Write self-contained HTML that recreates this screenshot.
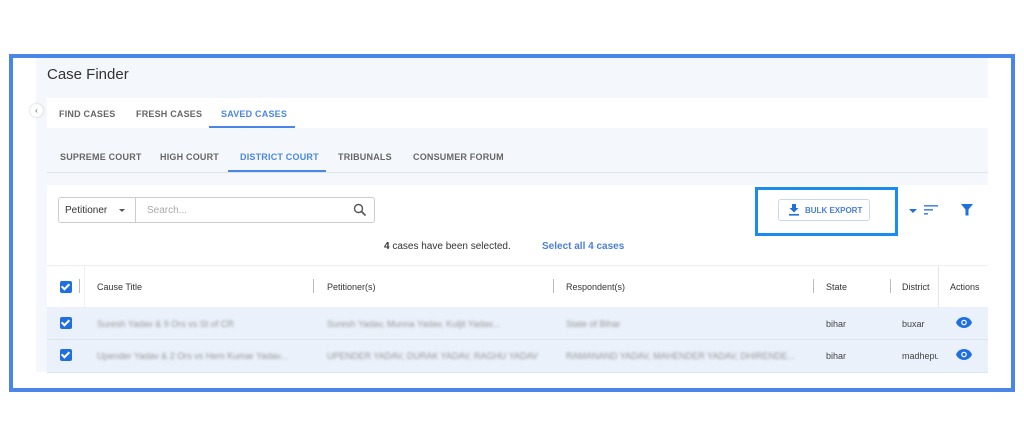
<!DOCTYPE html>
<html><head><meta charset="utf-8"><style>
*{box-sizing:border-box;margin:0;padding:0}
body{width:1024px;height:446px;background:#fff;font-family:"Liberation Sans",sans-serif;position:relative;overflow:hidden}
.frame{position:absolute;left:9px;top:54px;width:1006px;height:338px;border:4px solid #4a86e8}
.panel{position:absolute;left:36px;top:58px;width:952px;height:314px;background:#f4f7fb}
.abs{position:absolute}
.title{left:47px;top:66px;font-size:15px;color:#333}
.tabs{left:47px;top:98px;width:941px;height:30px;background:#fff}
.tab{position:absolute;top:11px;font-size:9px;font-weight:bold;color:#666;letter-spacing:.2px}
.blue{color:#4a86e8}
.ul{position:absolute;height:2px;background:#4a86e8}
.sub{left:47px;top:128px;width:941px;height:45px;border-bottom:1px solid #dfe3ea}
.card{left:47px;top:185px;width:941px;height:187px;background:#fff}
.circ{left:30px;top:104px;width:13px;height:13px;border-radius:50%;background:#fff;box-shadow:0 0 2px #bbb;font-size:8px;color:#555;text-align:center;line-height:13px}
.cb{position:absolute;width:12px;height:12px;background:#1f6fe0;border-radius:2px}
.cb:after{content:"";position:absolute;left:3px;top:1px;width:3px;height:6px;border:solid #fff;border-width:0 2px 2px 0;transform:rotate(45deg)}
.th{position:absolute;top:282px;font-size:9px;color:#333}
.sep{position:absolute;top:279px;width:1px;height:14px;background:#bbb}
.row{position:absolute;left:47px;width:941px;height:33px;background:#eaf1fb;border-bottom:1px solid #dde5f0}
.bl{position:absolute;font-size:9px;color:#999;filter:blur(1.3px)}
.td{position:absolute;font-size:9px;color:#444}
</style></head><body>
<div class="frame"></div>
<div class="panel abs"></div>
<div class="abs title">Case Finder</div>
<div class="abs tabs">
 <div class="tab" style="left:12px">FIND CASES</div>
 <div class="tab" style="left:89px">FRESH CASES</div>
 <div class="tab blue" style="left:174px">SAVED CASES</div>
 <div class="ul" style="left:162px;top:28px;width:86px"></div>
</div>
<div class="abs circ">‹</div>
<div class="abs sub">
 <div class="tab" style="left:13px;top:24px">SUPREME COURT</div>
 <div class="tab" style="left:113px;top:24px">HIGH COURT</div>
 <div class="tab blue" style="left:193px;top:24px">DISTRICT COURT</div>
 <div class="tab" style="left:291px;top:24px">TRIBUNALS</div>
 <div class="tab" style="left:366px;top:24px">CONSUMER FORUM</div>
 <div class="ul" style="left:181px;top:42px;width:98px"></div>
</div>
<div class="abs card"></div>
<div class="abs" style="left:58px;top:197px;width:317px;height:26px;border:1px solid #ccc;border-radius:3px;background:#fff">
 <div class="abs" style="left:76px;top:0;width:1px;height:24px;background:#ccc"></div>
 <div class="abs" style="left:6px;top:7px;font-size:10px;color:#333">Petitioner</div>
 <div class="abs" style="left:60px;top:11px;border:3px solid transparent;border-top:3px solid #555"></div>
 <div class="abs" style="left:88px;top:7px;font-size:10px;color:#aaa">Search...</div>
 <svg class="abs" style="left:294px;top:5px" width="14" height="14" viewBox="0 0 14 14"><circle cx="5.5" cy="5.5" r="4" fill="none" stroke="#555" stroke-width="1.4"/><path d="M8.5 8.5L12.5 12.5" stroke="#555" stroke-width="1.6"/></svg>
</div>
<div class="abs" style="left:755px;top:187px;width:143px;height:49px;border:3px solid #1a8cf0"></div>
<div class="abs" style="left:778px;top:199px;width:92px;height:22px;border:1px solid #c8d8f0;border-radius:3px;background:#fff">
 <svg class="abs" style="left:9px;top:4px" width="12" height="12" viewBox="0 0 12 12"><path d="M4 0h4v4h2.5L6 8.5 1.5 4H4z" fill="#1f6fe0"/><rect x="1" y="10" width="10" height="1.6" fill="#1f6fe0"/></svg>
 <div class="abs" style="left:26px;top:6px;font-size:8px;font-weight:bold;color:#4a7fd8">BULK EXPORT</div>
</div>
<div class="abs" style="left:909px;top:209px;border:4px solid transparent;border-top:4px solid #1f6fe0"></div>
<svg class="abs" style="left:924px;top:204px" width="14" height="12" viewBox="0 0 14 12"><rect x="0" y="1" width="14" height="1.6" fill="#4a86e8"/><rect x="0" y="5" width="9" height="1.6" fill="#4a86e8"/><rect x="0" y="9" width="4" height="1.6" fill="#4a86e8"/></svg>
<svg class="abs" style="left:961px;top:204px" width="12" height="12" viewBox="0 0 12 12"><path d="M0 0h12L7.5 5.5V11.5H4.5V5.5z" fill="#1f6fe0"/></svg>
<div class="abs" style="left:384px;top:241px;font-size:10px;color:#333"><b>4</b> cases have been selected.</div>
<div class="abs" style="left:542px;top:241px;font-size:10px;font-weight:bold;color:#4a7fd8">Select all 4 cases</div>
<div class="abs" style="left:47px;top:265px;width:941px;height:1px;background:#eee"></div>
<div class="abs" style="left:938px;top:266px;width:1px;height:106px;background:#e2e6ec"></div>
<div class="abs" style="left:84px;top:266px;width:1px;height:106px;background:#eef0f3"></div>
<div class="cb" style="left:60px;top:281px"></div>
<div class="sep" style="left:79px"></div>
<div class="th" style="left:97px">Cause Title</div>
<div class="sep" style="left:313px"></div>
<div class="th" style="left:327px">Petitioner(s)</div>
<div class="sep" style="left:553px"></div>
<div class="th" style="left:566px">Respondent(s)</div>
<div class="sep" style="left:813px"></div>
<div class="th" style="left:826px">State</div>
<div class="sep" style="left:890px"></div>
<div class="th" style="left:902px">District</div>
<div class="th" style="left:950px">Actions</div>
<div class="row" style="top:307px"></div>
<div class="row" style="top:340px"></div>
<div class="cb" style="left:60px;top:317px"></div>
<div class="cb" style="left:60px;top:349px"></div>
<div class="bl" style="left:97px;top:319px">Suresh Yadav &amp; 9 Ors vs St of CR</div>
<div class="bl" style="left:327px;top:319px">Suresh Yadav, Munna Yadav, Kuljit Yadav...</div>
<div class="bl" style="left:566px;top:319px">State of Bihar</div>
<div class="bl" style="left:97px;top:351px">Upender Yadav &amp; 2 Ors vs Hem Kumar Yadav...</div>
<div class="bl" style="left:327px;top:351px">UPENDER YADAV, DURAK YADAV, RAGHU YADAV</div>
<div class="bl" style="left:566px;top:351px">RAMANAND YADAV, MAHENDER YADAV, DHIRENDE...</div>
<div class="td" style="left:826px;top:319px">bihar</div>
<div class="td" style="left:902px;top:319px">buxar</div>
<div class="td" style="left:826px;top:351px">bihar</div>
<div class="td" style="left:902px;top:351px;width:36px;overflow:hidden;white-space:nowrap">madhepura</div>
<svg class="abs" style="left:956px;top:317px" width="16" height="11" viewBox="0 0 16 11"><path d="M8 0C4 0 1.2 2.6 0 5.5 1.2 8.4 4 11 8 11s6.8-2.6 8-5.5C14.8 2.6 12 0 8 0z" fill="#1f6fe0"/><circle cx="8" cy="5.5" r="2.8" fill="#fff"/><circle cx="8" cy="5.5" r="1.6" fill="#1f6fe0"/></svg>
<svg class="abs" style="left:956px;top:349px" width="16" height="11" viewBox="0 0 16 11"><path d="M8 0C4 0 1.2 2.6 0 5.5 1.2 8.4 4 11 8 11s6.8-2.6 8-5.5C14.8 2.6 12 0 8 0z" fill="#1f6fe0"/><circle cx="8" cy="5.5" r="2.8" fill="#fff"/><circle cx="8" cy="5.5" r="1.6" fill="#1f6fe0"/></svg>
</body></html>
